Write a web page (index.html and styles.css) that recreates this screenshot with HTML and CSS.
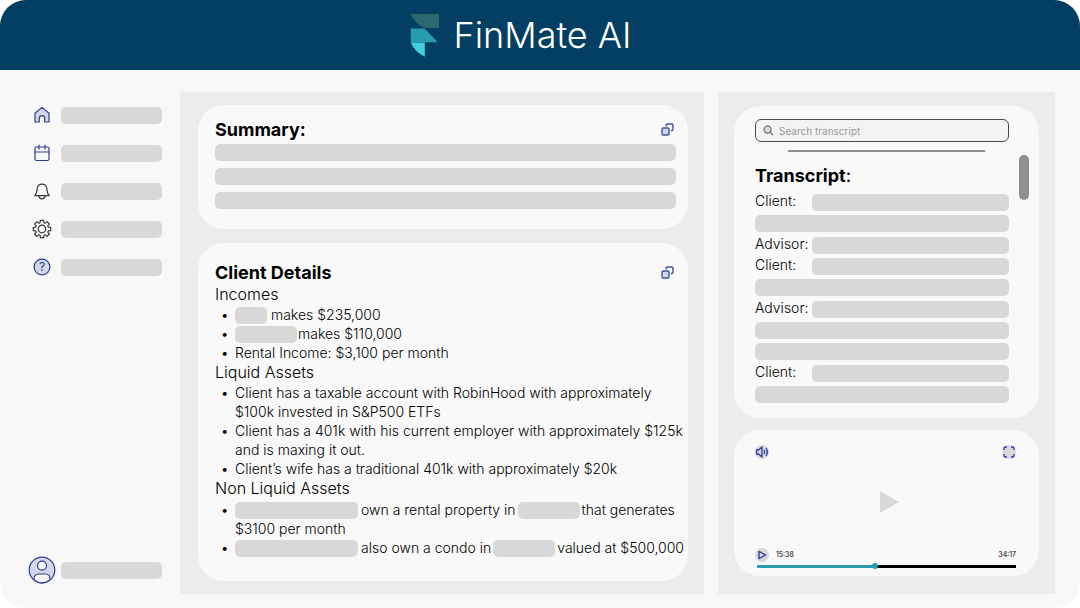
FILE: index.html
```html
<!DOCTYPE html>
<html lang="en">
<head>
  <meta charset="UTF-8">
  <meta name="viewport" content="width=device-width, initial-scale=1.0">
  <title>FinMate AI</title>
  <link rel="stylesheet" href="styles.css">
</head>
<body>
  <div class="app">
    <header class="header">
      <svg class="logo" viewBox="0 0 86 128" aria-hidden="true">
        <path fill="#2a6970" d="M1 0H86V42H44Q18 32 1 0Z"/>
        <path fill="#2a9caf" d="M2 43H43L83 84H2Z"/>
        <path fill="#43cde0" d="M2 85H44V127Q14 114 2 85Z"/>
      </svg>
      <h1>FinMate AI</h1>
    </header>

    <div class="layout">
      <!-- Sidebar -->
      <nav class="sidebar">
        <a href="#home" class="nav-item" aria-label="Home">
          <svg class="icon" viewBox="0 0 20 20">
            <path class="tint" d="M3 8.2 10 2.4 17 8.2V17H12.7V13.4A2.7 2.7 0 0 0 7.3 13.4V17H3Z"/>
          </svg>
          <span class="bar"></span>
        </a>
        <a href="#calendar" class="nav-item" aria-label="Calendar">
          <svg class="icon" viewBox="0 0 20 20">
            <rect x="3" y="4" width="14" height="13.5" rx="1.5"/>
            <path d="M3 9H17M7 2V6M13 2V6"/>
          </svg>
          <span class="bar"></span>
        </a>
        <a href="#alerts" class="nav-item" aria-label="Notifications">
          <svg class="icon dark" viewBox="0 0 20 20">
            <path d="M2.8 14.7C5 12.5 4.8 10 5.3 7A4.8 4.8 0 0 1 14.7 7C15.2 10 15 12.5 17.2 14.7ZM6.7 14.9C7.4 18.8 12.6 18.8 13.3 14.9"/>
          </svg>
          <span class="bar"></span>
        </a>
        <a href="#settings" class="nav-item" aria-label="Settings">
          <svg class="icon dark" viewBox="-10 -10 20 20">
            <path d="M8.7-1.7V1.7L6.3 1.9 5.8 3.1 7.4 5 5 7.4 3.1 5.8 1.9 6.3 1.7 8.7H-1.7L-1.9 6.3-3.1 5.8-5 7.4-7.4 5-5.8 3.1-6.3 1.9-8.7 1.7V-1.7L-6.3-1.9-5.8-3.1-7.4-5-5-7.4-3.1-5.8-1.9-6.3-1.7-8.7H1.7L1.9-6.3 3.1-5.8 5-7.4 7.4-5 5.8-3.1 6.3-1.9Z"/>
            <circle r="3.8"/>
          </svg>
          <span class="bar"></span>
        </a>
        <a href="#help" class="nav-item" aria-label="Help">
          <svg class="icon" viewBox="0 0 20 20">
            <circle class="tint" cx="10" cy="10" r="7.9"/>
            <text x="10" y="14" text-anchor="middle">?</text>
          </svg>
          <span class="bar"></span>
        </a>
        <a href="#profile" class="nav-item profile" aria-label="Profile">
          <svg class="icon avatar" viewBox="0 0 28 28">
            <circle class="tint" cx="14" cy="14" r="12.8"/>
            <circle class="blank" cx="14" cy="9.6" r="4.5"/>
            <path class="blank" d="M5.8 23.6C6 20 8 18 10.5 18H17.5C20 18 22 20 22.2 23.6Q14 30 5.8 23.6Z"/>
          </svg>
          <span class="bar"></span>
        </a>
      </nav>

      <!-- Summary and client details -->
      <main class="panel">
        <section class="card summary">
          <div class="card-head">
            <h2>Summary:</h2>
            <button class="expand" aria-label="Expand summary">
              <svg viewBox="0 0 13 13">
                <rect class="tint" x="1" y="5" width="7" height="7" rx="1.2"/>
                <path d="M5.2 3.5V2.2Q5.2 1 6.4 1H10.8Q12 1 12 2.2V6.3Q12 7.5 10.8 7.5H9.8"/>
              </svg>
            </button>
          </div>
          <span class="bar"></span>
          <span class="bar"></span>
          <span class="bar"></span>
        </section>

        <section class="card details">
          <div class="card-head">
            <h2>Client Details</h2>
            <button class="expand" aria-label="Expand client details">
              <svg viewBox="0 0 13 13">
                <rect class="tint" x="1" y="5" width="7" height="7" rx="1.2"/>
                <path d="M5.2 3.5V2.2Q5.2 1 6.4 1H10.8Q12 1 12 2.2V6.3Q12 7.5 10.8 7.5H9.8"/>
              </svg>
            </button>
          </div>
          <h3>Incomes</h3>
          <ul>
            <li><span class="bar redact short"></span> makes $235,000</li>
            <li><span class="bar redact"></span>makes $110,000</li>
            <li>Rental Income: $3,100 per month</li>
          </ul>
          <h3>Liquid Assets</h3>
          <ul>
            <li>Client has a taxable account with RobinHood with approximately $100k invested in S&amp;P500 ETFs</li>
            <li>Client has a 401k with his current employer with approximately $125k and is maxing it out.</li>
            <li>Client’s wife has a traditional 401k with approximately $20k</li>
          </ul>
          <h3>Non Liquid Assets</h3>
          <ul class="spaced">
            <li><span class="bar redact long"></span>own a rental property in<span class="bar redact inner"></span>that generates $3100 per month</li>
            <li><span class="bar redact long"></span>also own a condo in<span class="bar redact inner"></span>valued at $500,000</li>
          </ul>
        </section>
      </main>

      <!-- Transcript and recording -->
      <aside class="panel side">
        <section class="card transcript">
          <div class="transcript-body">
            <label class="search">
              <svg viewBox="0 0 12 12" aria-hidden="true">
                <circle cx="5" cy="5" r="3.9"/>
                <path d="M8 8 11 11"/>
              </svg>
              <input type="search" placeholder="Search transcript" aria-label="Search transcript">
            </label>
            <hr>
            <h2>Transcript<span>:</span></h2>
            <div class="lines">
              <div class="line"><span>Client:</span><span class="bar"></span></div>
              <span class="bar"></span>
              <div class="line"><span>Advisor:</span><span class="bar"></span></div>
              <div class="line"><span>Client:</span><span class="bar"></span></div>
              <span class="bar"></span>
              <div class="line"><span>Advisor:</span><span class="bar"></span></div>
              <span class="bar"></span>
              <span class="bar"></span>
              <div class="line"><span>Client:</span><span class="bar"></span></div>
              <span class="bar"></span>
            </div>
          </div>
          <div class="scroll-thumb"></div>
        </section>

        <section class="card player">
          <div class="player-row">
            <button class="round" aria-label="Volume">
              <svg viewBox="0 0 14 14">
                <path d="M1.5 5H3.5L7 2V12L3.5 9H1.5ZM9 5Q10.4 7 9 9M11 3.2Q13.8 7 11 10.8"/>
              </svg>
            </button>
            <button class="round" aria-label="Full screen">
              <svg viewBox="0 0 14 14">
                <path d="M2 5V3Q2 2 3 2H5M9 2H11Q12 2 12 3V5M12 9V11Q12 12 11 12H9M5 12H3Q2 12 2 11V9"/>
              </svg>
            </button>
          </div>
          <button class="big-play" aria-label="Play recording">
            <svg viewBox="0 0 19 22"><path d="M0 0 19 11 0 22Z"/></svg>
          </button>
          <div class="player-row">
            <button class="round" aria-label="Play">
              <svg viewBox="0 0 14 14"><path d="M4 3.4 10.6 7 4 10.6Z"/></svg>
            </button>
            <span class="time">15:38</span>
            <span class="time total">34:17</span>
          </div>
          <input class="seek" type="range" min="0" max="2057" value="938" aria-label="Seek" style="--played: 45.6%">
        </section>
      </aside>
    </div>
  </div>
</body>
</html>
```

FILE: styles.css
```css
* {
  box-sizing: border-box;
}
body {
  margin: 0;
  font-family: Inter, "Liberation Sans", sans-serif;
  font-size: 14px;
  font-weight: 300;
  line-height: 19px;
  color: #000;
  background-color: #fff;
}
h1, h2, h3, ul {
  margin: 0;
  padding: 0;
}
button {
  display: flex;
  align-items: center;
  justify-content: center;
  padding: 0;
  border: none;
  background: none;
  cursor: pointer;
}
.app {
  display: flex;
  flex-direction: column;
  min-height: 100vh;
  border-radius: 26px;
  overflow: hidden;
  background-color: #f8f8f8;
}

/* Header */
.header {
  display: flex;
  align-items: center;
  justify-content: center;
  gap: 14px;
  height: 70px;
  padding-right: 38px;
  background-color: #023f62;
  color: #fff;
}
.logo {
  width: 29px;
  height: 43px;
}
.header h1 {
  font-size: 36px;
  line-height: 44px;
  font-weight: 300;
}

/* Columns */
.layout {
  flex: 1;
  display: grid;
  grid-template-columns: 166px minmax(0, 1fr) 337px;
  gap: 14px;
  padding: 22px 25px 14px 0;
}
.panel {
  display: flex;
  flex-direction: column;
  gap: 14px;
  padding: 13px 16px 13px 18px;
  background-color: #ececec;
}
.card {
  border-radius: 26px;
  background-color: #f9f9f9;
}
.bar {
  display: block;
  height: 17px;
  border-radius: 5px;
  background-color: #d8d8d8;
}

/* Sidebar */
.sidebar {
  display: flex;
  flex-direction: column;
  gap: 10px;
  padding: 9px 4px 10px 28px;
}
.nav-item {
  display: grid;
  grid-template-columns: 28px 1fr;
  align-items: center;
  gap: 5px;
  height: 28px;
}
.profile {
  margin-top: auto;
}
.icon {
  width: 20px;
  height: 20px;
  justify-self: center;
  fill: none;
  stroke: #2b3f8f;
  stroke-width: 1.2;
  stroke-linejoin: round;
  stroke-linecap: round;
}
.icon.dark {
  stroke: #3a3a3a;
}
.icon text {
  font-size: 12px;
  font-weight: 400;
  fill: #2b3f8f;
  stroke: none;
}
.avatar {
  width: 28px;
  height: 28px;
}
.tint {
  fill: #d3d7e8;
}
.blank {
  fill: #f8f8f8;
}

/* Summary and client details */
.card-head {
  display: flex;
  align-items: center;
  justify-content: space-between;
  height: 22px;
}
h2 {
  font-size: 18px;
  line-height: 22px;
  font-weight: 700;
}
h3 {
  font-size: 16px;
  line-height: 21px;
  font-weight: 300;
}
.expand {
  width: 13px;
  height: 13px;
  margin: 0 2px 2px 0;
}
.expand svg {
  width: 13px;
  height: 13px;
  fill: none;
  stroke: #3f539c;
  stroke-width: 1.4;
}
.expand .tint {
  fill: #d3d7e8;
}
.summary {
  display: flex;
  flex-direction: column;
  gap: 7px;
  padding: 14px 12px 20px 17px;
}
.summary .card-head {
  margin-bottom: -4px;
}
.details {
  flex: 1;
  padding: 19px 4px 20px 17px;
}
.details .expand {
  margin-right: 10px;
}
.details ul {
  padding-left: 20px;
  list-style-type: "•\00a0\2009";
}
.details .spaced {
  padding-top: 1px;
}
.redact {
  display: inline-block;
  width: 62px;
  margin-right: 1px;
  vertical-align: -4px;
  line-height: 17px;
}
.redact.short {
  width: 32px;
  margin-right: 0;
}
.redact.long {
  width: 123px;
  margin-right: 3px;
}
.redact.inner {
  margin: 0 2px;
}

/* Transcript */
.side {
  gap: 12px;
  padding: 14px 16px 18px;
}
.transcript {
  display: flex;
  gap: 10px;
  padding: 13px 10px 15px 21px;
}
.transcript-body {
  flex: 1;
}
.search {
  display: flex;
  align-items: center;
  gap: 5px;
  height: 23px;
  padding: 0 7px;
  border: 1px solid #4a4a4a;
  border-radius: 6px;
  background-color: #f3f3f3;
}
.search svg {
  width: 11px;
  height: 11px;
  fill: #d3dbe4;
  stroke: #555;
  stroke-width: 1.1;
}
.search input {
  flex: 1;
  min-width: 0;
  padding: 0;
  border: none;
  outline: none;
  background: none;
  font-family: inherit;
  font-size: 10px;
}
.search input::placeholder {
  color: #999;
}
hr {
  height: 2px;
  margin: 8px 24px 13px 33px;
  border: none;
  background-color: #8f8f8f;
}
.transcript h2 span {
  font-weight: 500;
}
.lines {
  display: flex;
  flex-direction: column;
  justify-content: space-between;
  height: 209px;
  margin-top: 7px;
}
.line {
  display: grid;
  grid-template-columns: 57px 1fr;
  height: 17px;
  line-height: 14px;
}
.scroll-thumb {
  width: 10px;
  height: 45px;
  margin-top: 36px;
  border-radius: 5px;
  background-color: #8f8f8f;
}

/* Recording player */
.player {
  flex: 1;
  display: flex;
  flex-direction: column;
  padding: 15px 23px 7px 21px;
}
.player-row {
  display: flex;
  align-items: center;
  gap: 7px;
}
.player-row .round:last-child,
.total {
  margin-left: auto;
}
.round {
  width: 14px;
  height: 14px;
  border-radius: 50%;
  background-color: #d8d8d8;
}
.round svg {
  width: 14px;
  height: 14px;
  fill: none;
  stroke: #2b3f9a;
  stroke-width: 1.3;
  stroke-linejoin: round;
}
.big-play {
  margin: auto;
  padding: 0 0 4px 8px;
}
.big-play svg {
  width: 19px;
  height: 22px;
  fill: #d8d8d8;
}
.time {
  font-size: 7px;
  font-weight: 400;
  line-height: 14px;
}
.seek {
  appearance: none;
  height: 6px;
  margin: 1px 0 0 2px;
  background: linear-gradient(to right, #2a9caf var(--played), #000 var(--played)) center / 100% 3px no-repeat;
  cursor: pointer;
}
.seek::-webkit-slider-thumb {
  appearance: none;
  width: 6px;
  height: 6px;
  border-radius: 50%;
  background-color: #2a9caf;
}
```
